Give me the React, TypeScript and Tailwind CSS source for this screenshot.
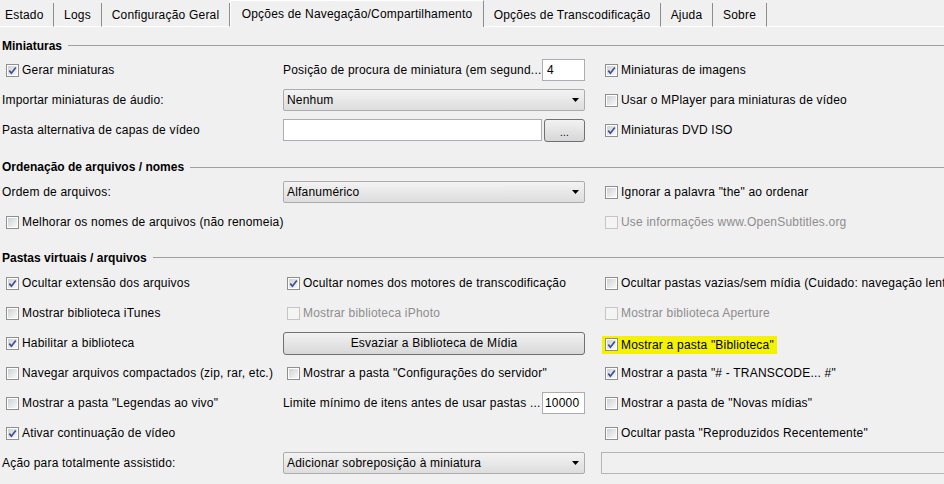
import React from 'react';

const Check = ({ checked = false, disabled = false }: { checked?: boolean; disabled?: boolean }) => (
  <span
    className={`relative inline-flex h-[13px] w-[13px] shrink-0 border ${
      disabled ? 'border-[#c5c5c5] bg-[#f4f4f4]' : 'border-[#8e8f8f] bg-white'
    }`}
  >
    {!disabled && <span className="absolute inset-[1px] bg-linear-to-br from-[#cfd1d4] to-[#f9f9f9]" />}
    {checked && (
      <svg viewBox="0 0 11 11" className="absolute inset-0 h-[11px] w-[11px]">
        <path d="M2.3 5.6 L4.4 8.2 L8.8 2.4" fill="none" stroke="#3d4f8f" strokeWidth="1.7" />
      </svg>
    )}
  </span>
);

const CheckItem = ({ label, checked, disabled }: { label: string; checked?: boolean; disabled?: boolean }) => (
  <div className="flex items-center gap-[3px] pl-[4px] whitespace-nowrap">
    <Check checked={checked} disabled={disabled} />
    <span className={disabled ? 'text-[#8d8d8d]' : 'text-black'}>{label}</span>
  </div>
);

const Arrow = () => (
  <svg width="7" height="4" viewBox="0 0 7 4" className="shrink-0">
    <polygon points="0,0 7,0 3.5,4" fill="#000" />
  </svg>
);

const Select = ({ value }: { value: string }) => (
  <div className="flex h-[22px] w-[302px] items-center justify-between rounded-[2px] border border-[#acacac] bg-linear-to-b from-[#f3f3f3] to-[#dddddd] pl-[3px] pr-[5px]">
    <span>{value}</span>
    <Arrow />
  </div>
);

const TextBox = ({ value = '', className = '' }: { value?: string; className?: string }) => (
  <div className={`flex h-[22px] items-center border border-[#abadb3] bg-white px-[4px] ${className}`}>{value}</div>
);

const Header = ({ title, className }: { title: string; className: string }) => (
  <div className={`flex items-center gap-[6px] ${className}`}>
    <span className="font-bold whitespace-nowrap tracking-normal">{title}</span>
    <div className="flex-1 border-t border-[#a0a0a0]" />
  </div>
);

const Row = ({ a, b, c }: { a?: React.ReactNode; b?: React.ReactNode; c?: React.ReactNode }) => (
  <div className="flex h-[30px] items-center">
    <div className="w-[281px] shrink-0">{a}</div>
    <div className="w-[302px] shrink-0">{b}</div>
    <div className="ml-[16px] min-w-0 flex-1 overflow-hidden whitespace-nowrap">{c}</div>
  </div>
);

const tabs = [
  { label: 'Estado', cls: 'w-[54px] pl-[5px]' },
  { label: 'Logs', cls: 'w-[48px] justify-center' },
  { label: 'Configuração Geral', cls: 'w-[128px] justify-center' },
  { label: 'Opções de Navegação/Compartilhamento', cls: 'w-[254px] justify-center', active: true },
  { label: 'Opções de Transcodificação', cls: 'w-[177px] justify-center' },
  { label: 'Ajuda', cls: 'w-[52px] justify-center' },
  { label: 'Sobre', cls: 'w-[54px] justify-center' },
];

export default function App() {
  return (
    <div
      className="h-[484px] w-[944px] overflow-hidden bg-[#f0f0f0] text-[12px] leading-[14px] tracking-[0.2px] text-black"
      style={{ fontFamily: '"Liberation Sans", Arial, sans-serif' }}
    >
      {/* tab strip */}
      <div className="flex h-[27px] items-end">
        {tabs.map((t) =>
          t.active ? (
            <div
              key={t.label}
              className={`flex h-[27px] shrink-0 items-start whitespace-nowrap border-l border-t border-r border-l-white border-t-white border-r-[#8d8d8d] bg-[#f0f0f0] pt-[6px] ${t.cls}`}
            >
              {t.label}
            </div>
          ) : (
            <div
              key={t.label}
              className={`flex h-[24px] shrink-0 items-center whitespace-nowrap border-b border-r border-b-white border-r-[#8d8d8d] pt-[1px] ${t.cls}`}
            >
              {t.label}
            </div>
          )
        )}
        <div className="h-[24px] flex-1 border-b border-white" />
      </div>

      <div className="pl-[2px]">
        <Header title="Miniaturas" className="mt-[9px] h-[19px]" />
        <Row
          a={<CheckItem label="Gerar miniaturas" checked />}
          b={
            <div className="flex items-center">
              <span className="whitespace-nowrap">Posição de procura de miniatura (em segund...</span>
              <TextBox value="4" className="ml-auto w-[43px]" />
            </div>
          }
          c={<CheckItem label="Miniaturas de imagens" checked />}
        />
        <Row
          a={<span>Importar miniaturas de áudio:</span>}
          b={<Select value="Nenhum" />}
          c={<CheckItem label="Usar o MPlayer para miniaturas de vídeo" />}
        />
        <Row
          a={<span>Pasta alternativa de capas de vídeo</span>}
          b={
            <div className="flex items-center">
              <TextBox className="w-[259px]" />
              <div className="ml-auto flex h-[23px] w-[41px] items-end justify-center rounded-[3px] border border-[#707070] bg-linear-to-b from-[#f2f2f2] to-[#d6d6d6] pb-[3px] text-[10px] leading-[10px]">
                ...
              </div>
            </div>
          }
          c={<CheckItem label="Miniaturas DVD ISO" checked />}
        />

        <Header title="Ordenação de arquivos / nomes" className="mt-[12px] h-[20px]" />
        <Row
          a={<span>Ordem de arquivos:</span>}
          b={<Select value="Alfanumérico" />}
          c={<CheckItem label={'Ignorar a palavra "the" ao ordenar'} />}
        />
        <Row
          a={<CheckItem label="Melhorar os nomes de arquivos (não renomeia)" />}
          c={<CheckItem label="Use informações www.OpenSubtitles.org" disabled />}
        />

        <Header title="Pastas virtuais / arquivos" className="mt-[10px] h-[21px]" />
        <Row
          a={<CheckItem label="Ocultar extensão dos arquivos" checked />}
          b={<CheckItem label="Ocultar nomes dos motores de transcodificação" checked />}
          c={<CheckItem label="Ocultar pastas vazias/sem mídia (Cuidado: navegação lenta)" />}
        />
        <Row
          a={<CheckItem label="Mostrar biblioteca iTunes" />}
          b={<CheckItem label="Mostrar biblioteca iPhoto" disabled />}
          c={<CheckItem label="Mostrar biblioteca Aperture" disabled />}
        />
        <Row
          a={<CheckItem label="Habilitar a biblioteca" checked />}
          b={
            <div className="flex h-[23px] w-[302px] items-center justify-center rounded-[3px] border border-[#707070] bg-linear-to-b from-[#f2f2f2] to-[#d8d8d8]">
              Esvaziar a Biblioteca de Mídia
            </div>
          }
          c={
            <div className="ml-[1px] mt-[3px] flex h-[18px] w-fit items-center gap-[3px] bg-[#f3f300] pl-[3px] pr-[3px]">
              <Check checked />
              <span>Mostrar a pasta "Biblioteca"</span>
            </div>
          }
        />
        <Row
          a={<CheckItem label="Navegar arquivos compactados (zip, rar, etc.)" />}
          b={<CheckItem label={'Mostrar a pasta "Configurações do servidor"'} />}
          c={<CheckItem label={'Mostrar a pasta "# - TRANSCODE... #"'} checked />}
        />
        <Row
          a={<CheckItem label={'Mostrar a pasta "Legendas ao vivo"'} />}
          b={
            <div className="flex items-center">
              <span className="whitespace-nowrap">Limite mínimo de itens antes de usar pastas ...</span>
              <TextBox value="10000" className="ml-auto w-[43px] !px-[2px]" />
            </div>
          }
          c={<CheckItem label={'Mostrar a pasta de "Novas mídias"'} />}
        />
        <Row
          a={<CheckItem label="Ativar continuação de vídeo" checked />}
          c={<CheckItem label={'Ocultar pasta "Reproduzidos Recentemente"'} />}
        />
        <Row
          a={<span>Ação para totalmente assistido:</span>}
          b={<Select value="Adicionar sobreposição à miniatura" />}
          c={<div className="h-[22px] w-full border-y border-l border-[#b5b5b5] bg-[#f0f0f0]" />}
        />
      </div>
    </div>
  );
}
